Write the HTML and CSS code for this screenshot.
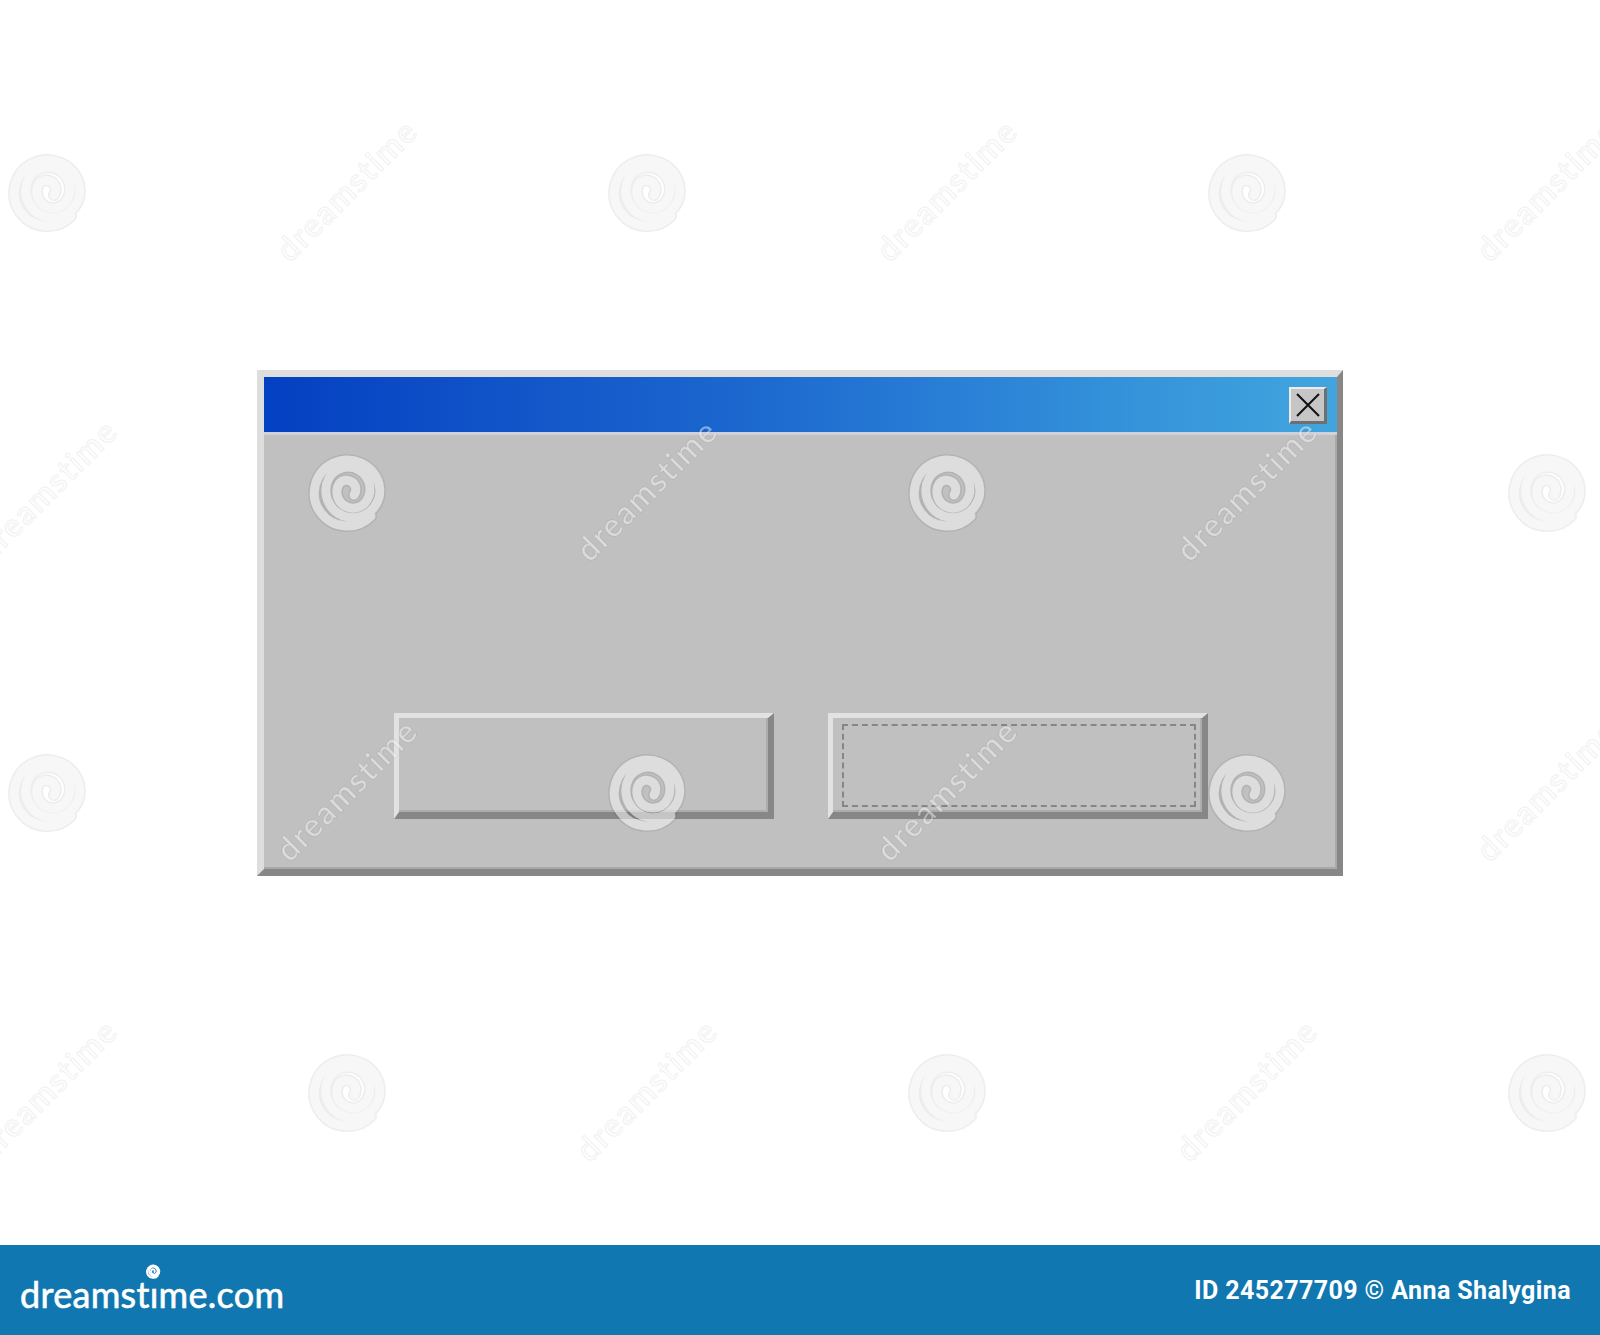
FILE: index.html
```html
<!DOCTYPE html>
<html lang="en">
<head>
  <meta charset="UTF-8" />
  <title>Dialog</title>
  <link rel="stylesheet" href="styles.css">
</head>
<body>
  <main class="stage">
    <div class="window">
      <div class="titlebar">
        <button class="close-btn" aria-label="Close">
          <svg width="26" height="26" viewBox="0 0 26 26">
            <path d="M2 2 L24 24 M24 2 L2 24" stroke="#111" stroke-width="2" fill="none" />
          </svg>
        </button>
      </div>
      <div class="window-body">
        <div class="actions">
          <button class="btn"></button>
          <button class="btn"><span class="focus-ring"></span></button>
        </div>
      </div>
    </div>

    <!-- stock watermark layer -->
    <svg class="watermark" width="1600" height="1245">
      <defs>
        <g id="swirl">
          <path d="M22 24 A33 33 0 1 1 30 -8 A27 27 0 1 1 -20 -14 A21 21 0 1 1 18 8 A15 15 0 1 1 -10 -8 A9 9 0 1 1 5 3"
                fill="none" stroke-linecap="round" />
        </g>
        <pattern id="marks" x="-101" y="42" width="600" height="600" patternUnits="userSpaceOnUse">
          <use href="#swirl" x="150" y="150" class="swirl-edge" />
          <use href="#swirl" x="150" y="150" class="swirl-fill" />
          <use href="#swirl" x="450" y="450" class="swirl-edge" />
          <use href="#swirl" x="450" y="450" class="swirl-fill" />
          <text x="456" y="156" class="mark-text" transform="rotate(-45 456 156)">dreamstime</text>
          <text x="156" y="456" class="mark-text" transform="rotate(-45 156 456)">dreamstime</text>
        </pattern>
      </defs>
      <rect width="1600" height="1245" fill="url(#marks)" />
    </svg>
  </main>

  <footer class="credit-bar">
    <span class="brand">dreamst<span class="brand-i">ı<svg class="brand-swirl" width="15" height="15" viewBox="-40 -40 80 80"><use href="#swirl" /></svg></span>me.com</span>
    <span class="credit">ID 245277709 © Anna Shalygina</span>
  </footer>
</body>
</html>
```

FILE: styles.css
```css
html, body {
  margin: 0;
  padding: 0;
}

body {
  width: 1600px;
  height: 1335px;
  display: flex;
  flex-direction: column;
  background-color: #fff;
  font-family: "Liberation Sans", Arial, sans-serif;
  overflow: hidden;
}

.stage {
  position: relative;
  flex: 1;
  display: flex;
  align-items: center;
  justify-content: center;
}

/* classic dialog window */
.window {
  width: 1086px;
  height: 506px;
  box-sizing: border-box;
  display: flex;
  flex-direction: column;
  background-color: #c0c0c0;
  border-style: solid;
  border-width: 7px 6px 7px 7px;
  border-color: #dedede #878787 #878787 #dedede;
  box-shadow: inset -2px -2px 0 #a9a9a9;
}

.titlebar {
  height: 55px;
  flex-shrink: 0;
  display: flex;
  align-items: center;
  justify-content: flex-end;
  padding-right: 10px;
  background: linear-gradient(90deg, #0340c2 0%, #1356c9 25%, #1c68cf 45%, #2a80d6 65%, #3594da 82%, #42a5de 100%);
  border-bottom: 3px solid #cfd2d8;
}

.close-btn {
  width: 38px;
  height: 37px;
  margin-top: 2px;
  padding: 0;
  box-sizing: border-box;
  display: flex;
  align-items: center;
  justify-content: center;
  background-color: #c6c6c6;
  border-style: solid;
  border-width: 2px 3px 3px 2px;
  border-color: #ececec #6f6f6f #6f6f6f #ececec;
  cursor: pointer;
}

.window-body {
  flex: 1;
  display: flex;
  flex-direction: column;
  justify-content: flex-end;
  padding-bottom: 50px;
}

.actions {
  display: flex;
  justify-content: center;
  gap: 54px;
}

.btn {
  width: 380px;
  height: 106px;
  padding: 0;
  box-sizing: border-box;
  display: flex;
  background-color: #c0c0c0;
  border-style: solid;
  border-width: 5px 6px 7px 5px;
  border-color: #e2e2e2 #878787 #878787 #e2e2e2;
  box-shadow: inset 0 -2px 0 #adadad, inset -2px 0 0 #adadad;
  cursor: pointer;
}

.focus-ring {
  flex: 1;
  margin: 6px 6px 5px 9px;
  border: 2px dashed #868686;
}

/* overlay marks */
.watermark {
  position: absolute;
  left: 0;
  top: 0;
  pointer-events: none;
}

.swirl-edge {
  stroke: rgba(0, 0, 0, 0.07);
  stroke-width: 12;
}

.swirl-fill {
  stroke: rgba(255, 255, 255, 0.55);
  stroke-width: 9;
}

.mark-text {
  font-family: Lato, "DejaVu Sans", sans-serif;
  font-size: 32px;
  letter-spacing: 2px;
  text-anchor: middle;
  fill: rgba(255, 255, 255, 0.45);
  stroke: rgba(0, 0, 0, 0.06);
  stroke-width: 1.5px;
  paint-order: stroke;
}

/* footer credit bar */
.credit-bar {
  height: 90px;
  flex-shrink: 0;
  display: flex;
  align-items: center;
  justify-content: space-between;
  padding: 0 29px 0 20px;
  background-color: #1177b0;
  color: #fff;
}

.brand {
  font-family: Lato, "DejaVu Sans", sans-serif;
  font-size: 36px;
  letter-spacing: 0.3px;
  margin-top: 8px;
  -webkit-text-stroke: 0.6px #fff;
}

.brand-i {
  position: relative;
}

.brand-swirl {
  position: absolute;
  left: -4px;
  top: -8px;
  fill: none;
  stroke: #fff;
  stroke-width: 10;
}

.credit {
  font-family: Roboto, "Liberation Sans", sans-serif;
  font-weight: 700;
  font-size: 25px;
  letter-spacing: 0.4px;
}
```
